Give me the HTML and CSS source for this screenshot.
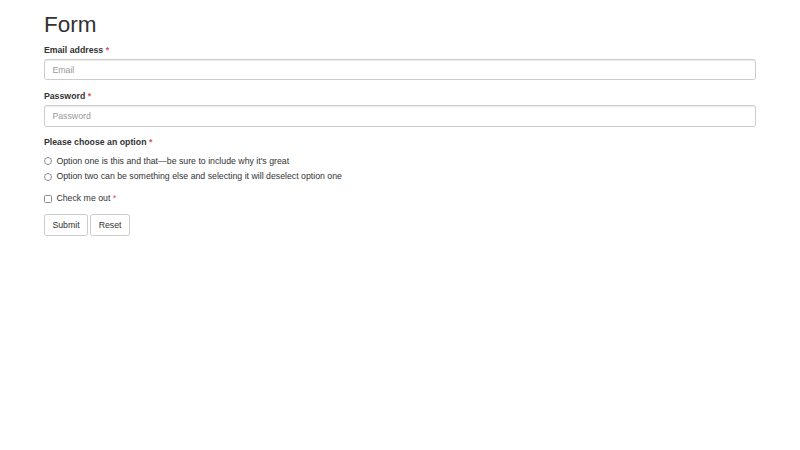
FILE: index.html
```html
<!doctype html>
<html lang="en">
<head>
    <meta charset="UTF-8">
    <title>Form</title>
    <link rel="stylesheet" href="styles.css">
</head>
<body>

    <div class="container">
        <h1>Form</h1>
        <form class="form">
            <div class="form-group">
                <label class="control-label" for="email">Email address <span class="req">*</span></label>
                <input class="form-control" type="email" id="email" placeholder="Email">
            </div>
            <div class="form-group">
                <label class="control-label" for="password">Password <span class="req">*</span></label>
                <input class="form-control" type="password" id="password" placeholder="Password">
            </div>
            <div class="form-group">
                <label class="control-label control-label--block">Please choose an option <span class="req">*</span></label>
                <div class="radio">
                    <label><input type="radio" name="option" value="one">Option one is this and that&mdash;be sure to include why it's great</label>
                </div>
                <div class="radio">
                    <label><input type="radio" name="option" value="two">Option two can be something else and selecting it will deselect option one</label>
                </div>
            </div>
            <div class="form-group">
                <div class="checkbox">
                    <label><input type="checkbox" name="check">Check me out <span class="req">*</span></label>
                </div>
            </div>
            <div class="actions">
                <button class="btn" type="submit">Submit</button>
                <button class="btn" type="reset">Reset</button>
            </div>
        </form>
    </div>

</body>
</html>
```

FILE: styles.css
```css
*,*:before,*:after{
    box-sizing: border-box;
}
body{
    margin: 0;
    padding: 0;
    background: #fff;
    color: #333;
    font-family: 'Liberation Sans', Arial, sans-serif;
    font-size: 8.75px;
    line-height: 12.5px;
}
.container{
    width: 731px;
    margin: 0 auto;
    padding: 0 9.4px;
}
h1{
    font-size: 22.5px;
    line-height: 24.75px;
    font-weight: 500;
    margin: 12.5px 0 6.25px;
}
.form-group{
    margin-bottom: 9.375px;
}
.control-label{
    display: inline-block;
    font-weight: bold;
    margin-bottom: 3.125px;
}
.control-label--block{
    display: block;
}
.req{
    color: #d9534f;
}
.form-control{
    display: block;
    width: 100%;
    height: 21.25px;
    padding: 3.75px 7.5px;
    font-family: inherit;
    font-size: 8.75px;
    line-height: 12.5px;
    color: #555;
    background: #fff;
    border: 1px solid #ccc;
    border-radius: 2.5px;
    box-shadow: inset 0 1px 1px rgba(0,0,0,.075);
}
.form-control::placeholder{
    color: #999;
}
.radio,
.checkbox{
    position: relative;
    display: block;
    margin: 6.25px 0;
}
.radio + .radio{
    margin-top: -3.125px;
}
.radio label,
.checkbox label{
    display: block;
    min-height: 12.5px;
    padding-left: 12.5px;
    font-weight: normal;
}
.radio input,
.checkbox input{
    position: absolute;
    -webkit-appearance: none;
    appearance: none;
    width: 8px;
    height: 8px;
    margin: 2.5px 0 0 -12.5px;
    border: 1px solid #8f8f8f;
    background: #fff;
}
.radio input{
    border-radius: 50%;
}
.checkbox input{
    border-radius: 1.5px;
}
.actions{
    display: flex;
    gap: 2px;
}
.btn{
    display: inline-block;
    padding: 3.75px 7.5px;
    font-family: inherit;
    font-size: 8.75px;
    line-height: 12.5px;
    color: #333;
    background: #fff;
    border: 1px solid #ccc;
    border-radius: 2.5px;
    cursor: pointer;
}
```
